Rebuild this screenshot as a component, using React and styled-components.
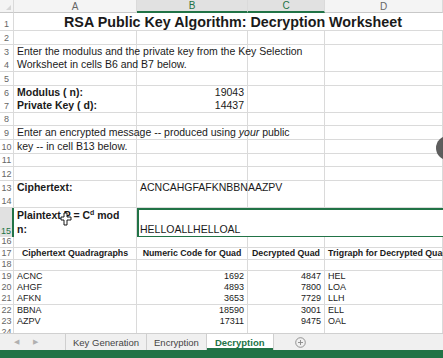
import React from "react";
import styled, { createGlobalStyle } from "styled-components";

const GREEN = "#217346";
const GRID = "#dadada";

const GlobalStyle = createGlobalStyle`
  html, body {
    margin: 0;
    padding: 0;
    background: #fff;
    overflow: hidden;
  }
  body {
    font-family: "Liberation Sans", Arial, sans-serif;
    color: #1a1a1a;
  }
`;

const Window = styled.div`
  position: relative;
  width: 443px;
  height: 358px;
  display: flex;
  flex-direction: column;
  overflow: hidden;
`;

// grille de la feuille
const Sheet = styled.div`
  height: 333px;
  overflow: hidden;
`;

const COLS = "14px 123px 111px 77px 118px";

const Row = styled.div`
  display: grid;
  grid-template-columns: ${COLS};
  height: ${(p) => p.$h}px;
  overflow: hidden;
`;

const ColHead = styled.div`
  display: flex;
  align-items: center;
  justify-content: center;
  font-size: 10px;
  color: ${(p) => (p.$sel ? GREEN : "#666")};
  background: ${(p) => (p.$sel ? "#e1e1e1" : "#f4f4f4")};
  border-right: 1px solid ${GRID};
  border-bottom: ${(p) => (p.$sel ? `2px solid ${GREEN}` : `1px solid #c8c8c8`)};
  box-sizing: border-box;
`;

const Corner = styled(ColHead)`
  position: relative;
  &::after {
    content: "";
    position: absolute;
    right: 2px;
    bottom: 2px;
    border-left: 5px solid transparent;
    border-bottom: 5px solid #d6d6d6;
  }
`;

const RowNum = styled.div`
  display: flex;
  align-items: flex-end;
  justify-content: center;
  padding-bottom: 1px;
  font-size: 9px;
  color: ${(p) => (p.$sel ? GREEN : "#666")};
  background: ${(p) => (p.$sel ? "#e1e1e1" : "#fff")};
  border-right: ${(p) => (p.$sel ? `2px solid ${GREEN}` : `1px solid ${GRID}`)};
  border-bottom: 1px solid ${GRID};
  box-sizing: border-box;
  overflow: hidden;
`;

const Cell = styled.div`
  position: relative;
  display: flex;
  align-items: flex-end;
  justify-content: ${(p) =>
    p.$align === "right" ? "flex-end" : p.$align === "center" ? "center" : "flex-start"};
  grid-column: ${(p) => p.$span || "auto"};
  padding: 0 3px 1px 3px;
  font-size: ${(p) => p.$size || 10.5}px;
  font-weight: ${(p) => (p.$bold ? 700 : 400)};
  border-right: 1px solid ${GRID};
  border-bottom: 1px solid ${GRID};
  box-sizing: border-box;
  white-space: nowrap;
  overflow: visible;
  z-index: ${(p) => (p.$over ? 1 : 0)};
`;

const Title = styled(Cell)`
  align-items: center;
  padding-left: 12px;
  padding-bottom: 0;
  font-size: 14.3px;
  font-weight: 700;
  border-right: none;
`;

const WrapCell = styled(Cell)`
  line-height: 14px;
  padding-bottom: 1px;
`;

const Sup = styled.sup`
  font-size: 7px;
  line-height: 0;
  vertical-align: 4px;
`;

const Selected = styled(Cell)`
  border: 2px solid ${GREEN};
  border-right: none;
  padding-left: 1px;
`;

const Cursor = styled.svg`
  position: absolute;
  left: 46px;
  top: 4px;
`;

const Overlay = styled.div`
  position: absolute;
  left: 436px;
  top: 136px;
  width: 24px;
  height: 24px;
  border-radius: 50%;
  background: #4d4d4d;
  opacity: 0.9;
`;

// onglets du classeur
const TabBar = styled.div`
  height: 17px;
  display: flex;
  align-items: stretch;
  background: #f0f0f0;
  border-top: 1px solid #d0d0d0;
  box-sizing: border-box;
  font-size: 9.5px;
  color: #444;
`;

const Nav = styled.div`
  width: 66px;
  display: flex;
  align-items: center;
  gap: 14px;
  padding-left: 14px;
  color: #b0b0b0;
  font-size: 7px;
  border-right: 1px solid #cfcfcf;
  box-sizing: border-box;
`;

const Tab = styled.div`
  display: flex;
  align-items: center;
  padding: 0 ${(p) => (p.$active ? 8 : 7)}px;
  background: ${(p) => (p.$active ? "#fff" : "transparent")};
  color: ${(p) => (p.$active ? GREEN : "#444")};
  font-weight: ${(p) => (p.$active ? 700 : 400)};
  border-right: 1px solid #cfcfcf;
  box-shadow: ${(p) => (p.$active ? `inset 0 -2px 0 ${GREEN}` : "none")};
`;

const AddTab = styled.div`
  display: flex;
  align-items: center;
  padding-left: 21px;
`;

const Status = styled.div`
  height: 8px;
  background: ${GREEN};
`;

const data = [
  ["ACNC", "1692", "4847", "HEL"],
  ["AHGF", "4893", "7800", "LOA"],
  ["AFKN", "3653", "7729", "LLH"],
  ["BBNA", "18590", "3001", "ELL"],
  ["AZPV", "17311", "9475", "OAL"],
];

const Empty = ({ n, h = 13.6, size }) => (
  <Row $h={h}>
    <RowNum>{n}</RowNum>
    <Cell $size={size} />
    <Cell $size={size} />
    <Cell $size={size} />
    <Cell $size={size} />
  </Row>
);

function App() {
  return (
    <Window>
      <GlobalStyle />
      <Sheet>
        <Row $h={13}>
          <Corner />
          <ColHead>A</ColHead>
          <ColHead $sel>B</ColHead>
          <ColHead $sel>C</ColHead>
          <ColHead>D</ColHead>
        </Row>
        <Row $h={18.2}>
          <RowNum>1</RowNum>
          <Title $span="2 / 6" $align="center">
            RSA Public Key Algorithm: Decryption Worksheet
          </Title>
        </Row>
        <Empty n={2} />
        <Row $h={13.6}>
          <RowNum>3</RowNum>
          <Cell $over>Enter the modulus and the private key from the Key Selection</Cell>
          <Cell />
          <Cell />
          <Cell />
        </Row>
        <Row $h={13.6}>
          <RowNum>4</RowNum>
          <Cell $over>Worksheet in cells B6 and B7 below.</Cell>
          <Cell />
          <Cell />
          <Cell />
        </Row>
        <Empty n={5} />
        <Row $h={13.6}>
          <RowNum>6</RowNum>
          <Cell $bold>Modulus ( n):</Cell>
          <Cell $align="right">19043</Cell>
          <Cell />
          <Cell />
        </Row>
        <Row $h={13.6}>
          <RowNum>7</RowNum>
          <Cell $bold>Private Key ( d):</Cell>
          <Cell $align="right">14437</Cell>
          <Cell />
          <Cell />
        </Row>
        <Empty n={8} />
        <Row $h={13.6}>
          <RowNum>9</RowNum>
          <Cell $over>
            Enter an encrypted message -- produced using&nbsp;<i>your</i>&nbsp;public
          </Cell>
          <Cell />
          <Cell />
          <Cell />
        </Row>
        <Row $h={13.6}>
          <RowNum>10</RowNum>
          <Cell $over>key -- in cell B13 below.</Cell>
          <Cell />
          <Cell />
          <Cell />
        </Row>
        <Empty n={11} />
        <Empty n={12} />
        <Row $h={13.6}>
          <RowNum>13</RowNum>
          <Cell $bold>Ciphertext:</Cell>
          <Cell $over>ACNCAHGFAFKNBBNAAZPV</Cell>
          <Cell />
          <Cell />
        </Row>
        <Empty n={14} />
        <Row $h={29}>
          <RowNum $sel>15</RowNum>
          <WrapCell $bold>
            <span>
              Plaintext P = C<Sup>d</Sup> mod
              <br />
              n:
            </span>
            <Cursor width="12" height="14" viewBox="0 0 12 14">
              <path
                d="M4 1h3v4h4v3H7v5H4V8H1V5h3z"
                fill="#fff"
                stroke="#000"
                strokeWidth="0.9"
              />
            </Cursor>
          </WrapCell>
          <Selected $span="3 / 6">HELLOALLHELLOAL</Selected>
        </Row>
        <Empty n={16} h={11.3} size={9} />
        <Row $h={11.3}>
          <RowNum>17</RowNum>
          <Cell $bold $size={8.8} $align="center">Ciphertext Quadragraphs</Cell>
          <Cell $bold $size={8.8} $align="center">Numeric Code for Quad</Cell>
          <Cell $bold $size={8.8} $align="center">Decrypted Quad</Cell>
          <Cell $bold $size={8.8}>Trigraph for Decrypted Quad</Cell>
        </Row>
        <Empty n={18} h={11.3} size={9} />
        {data.map((r, i) => (
          <Row $h={11.3} key={r[0]}>
            <RowNum>{19 + i}</RowNum>
            <Cell $size={9}>{r[0]}</Cell>
            <Cell $size={9} $align="right">{r[1]}</Cell>
            <Cell $size={9} $align="right">{r[2]}</Cell>
            <Cell $size={9}>{r[3]}</Cell>
          </Row>
        ))}
        <Empty n={24} h={11.3} size={9} />
      </Sheet>
      <TabBar>
        <Nav>
          <span>◀</span>
          <span>▶</span>
        </Nav>
        <Tab>Key Generation</Tab>
        <Tab>Encryption</Tab>
        <Tab $active>Decryption</Tab>
        <AddTab>
          <svg width="11" height="11" viewBox="0 0 11 11">
            <circle cx="5.5" cy="5.5" r="4.8" fill="none" stroke="#888" strokeWidth="0.9" />
            <path d="M5.5 3v5M3 5.5h5" stroke="#888" strokeWidth="0.9" />
          </svg>
        </AddTab>
      </TabBar>
      <Status />
      <Overlay />
    </Window>
  );
}

export default App;
